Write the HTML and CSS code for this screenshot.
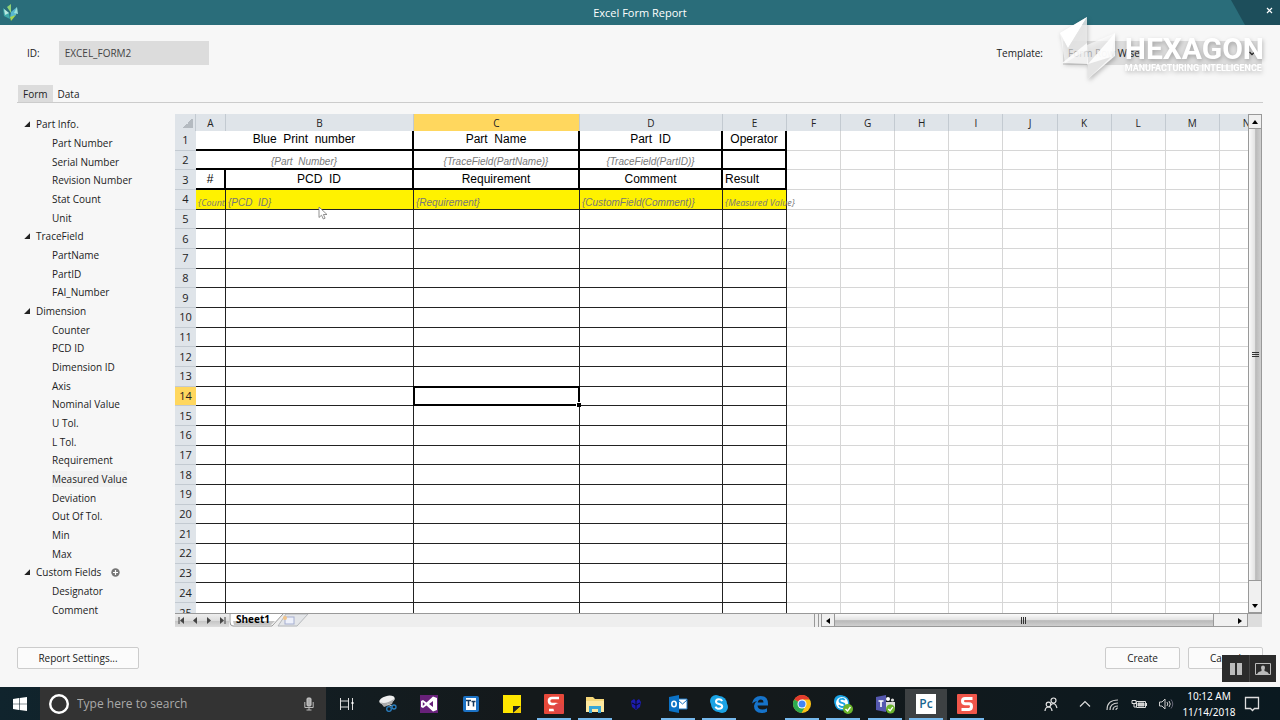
FILE: index.html
```html
<!DOCTYPE html>
<html lang="en">
  <head>
    <meta charset="utf-8">
    <title>Excel Form Report</title>
    <link rel="stylesheet" href="styles.css">
  </head>
  <body>
  <div class="titlebar">
      <svg class="app-logo" viewBox="0 0 16 17">
          <path d="M0 4l6 5 1 6-6-3z" fill="#3fa9a9"/>
          <path d="M4 3l4-3v9z" fill="#8fd175"/>
          <path d="M1 5l5 4-4 2z" fill="#b9e8e0"/>
          <path d="M8 8l6-5-1 8-6 3z" fill="#57b8cf"/>
          <path d="M7 13l6-2-5 6z" fill="#a8d84e"/>
          <path d="M14 3l-3 6 4 1z" fill="#9be0da"/>
      </svg>
      <h1>Excel Form Report</h1>
      <button class="close" aria-label="Close">
          <svg width="7" height="7" viewBox="0 0 7 7"><path d="M1 1l5 5M6 1L1 6" stroke="#fff" stroke-width="1.2"/></svg>
      </button>
  </div>

  <div class="head">
      <label for="formId">ID:</label>
      <input id="formId" type="text" value="EXCEL_FORM2">
      <label class="template-label" for="template">Template:</label>
      <div class="select-box">
          <select id="template">
              <option>Form Row Wise</option>
          </select>
          <svg class="arrow" width="6" height="5" viewBox="0 0 6 5"><path d="M.5 1L3 3.6 5.5 1" fill="none" stroke="#222" stroke-width="1.2"/></svg>
      </div>
  </div>

  <div class="tabs">
      <button class="tab active">Form</button>
      <button class="tab">Data</button>
  </div>

  <div class="work-area">
      <ul class="tree">
          <li class="group">Part Info.</li>
          <li>Part Number</li>
          <li>Serial Number</li>
          <li>Revision Number</li>
          <li>Stat Count</li>
          <li>Unit</li>
          <li class="group">TraceField</li>
          <li>PartName</li>
          <li>PartID</li>
          <li>FAI_Number</li>
          <li class="group">Dimension</li>
          <li>Counter</li>
          <li>PCD ID</li>
          <li>Dimension ID</li>
          <li>Axis</li>
          <li>Nominal Value</li>
          <li>U Tol.</li>
          <li>L Tol.</li>
          <li>Requirement</li>
          <li><span class="hover">Measured Value</span></li>
          <li>Deviation</li>
          <li>Out Of Tol.</li>
          <li>Min</li>
          <li>Max</li>
          <li class="group">Custom Fields
              <button class="add" aria-label="Add custom field">
                  <svg width="9" height="9" viewBox="0 0 9 9"><circle cx="4.5" cy="4.5" r="4.2" fill="#777"/><path d="M4.5 2v5M2 4.5h5" stroke="#fff" stroke-width="1.2"/></svg>
              </button>
          </li>
          <li>Designator</li>
          <li>Comment</li>
      </ul>

      <div class="sheet">
          <div class="sheet-top">
              <div class="viewport">
                  <table class="grid">
                      <colgroup>
                          <col class="col-num"><col class="col-a"><col class="col-b"><col class="col-c"><col class="col-d"><col class="col-e">
                          <col><col><col><col><col><col><col><col><col>
                      </colgroup>
                      <thead>
                          <tr>
                              <th class="corner"></th>
                              <th>A</th><th>B</th><th class="current">C</th><th>D</th><th>E</th><th>F</th><th>G</th><th>H</th>
                              <th>I</th><th>J</th><th>K</th><th>L</th><th>M</th><th>N</th>
                          </tr>
                      </thead>
                      <tbody id="rows">
                          <tr class="title-row">
                              <th>1</th>
                              <td class="box" colspan="2">Blue  Print  number</td><td class="box">Part  Name</td><td class="box">Part  ID</td><td class="box">Operator</td>
                              <td></td><td></td><td></td><td></td><td></td><td></td><td></td><td></td><td></td>
                          </tr>
                          <tr class="field-row">
                              <th>2</th>
                              <td class="box" colspan="2">{Part  Number}</td><td class="box">{TraceField(PartName)}</td><td class="box">{TraceField(PartID)}</td><td class="box"></td>
                              <td></td><td></td><td></td><td></td><td></td><td></td><td></td><td></td><td></td>
                          </tr>
                          <tr class="title-row">
                              <th>3</th>
                              <td class="box">#</td><td class="box">PCD  ID</td><td class="box">Requirement</td><td class="box">Comment</td><td class="box left">Result</td>
                              <td></td><td></td><td></td><td></td><td></td><td></td><td></td><td></td><td></td>
                          </tr>
                          <tr class="field-row yellow-row">
                              <th>4</th>
                              <td class="line small">{Count</td><td class="line">{PCD  ID}</td><td class="line">{Requirement}</td><td class="line">{CustomField(Comment)}</td><td class="line small">{Measured Value}</td>
                              <td></td><td></td><td></td><td></td><td></td><td></td><td></td><td></td><td></td>
                          </tr>
                      </tbody>
                  </table>
              </div>
              <div class="vscroll">
                  <button aria-label="Scroll up"><svg width="6" height="4" viewBox="0 0 6 4"><path d="M0 4l3-4 3 4z"/></svg></button>
                  <div class="vthumb"><svg width="7" height="6" viewBox="0 0 7 6"><path d="M0 .5h7M0 2.5h7M0 4.5h7" stroke="#333"/></svg></div>
                  <div class="vtrack"></div>
                  <button aria-label="Scroll down"><svg width="6" height="4" viewBox="0 0 6 4"><path d="M0 0h6L3 4z"/></svg></button>
              </div>
          </div>
          <div class="sheet-bottom">
              <div class="nav">
                  <button aria-label="First sheet"><svg width="7" height="7" viewBox="0 0 7 7"><path d="M1 0v7" stroke="#444"/><path d="M6 0v7L2 3.5z" fill="#444"/></svg></button>
                  <button aria-label="Previous sheet"><svg width="7" height="7" viewBox="0 0 7 7"><path d="M5 0v7L1 3.5z" fill="#444"/></svg></button>
                  <button aria-label="Next sheet"><svg width="7" height="7" viewBox="0 0 7 7"><path d="M2 0v7l4-3.5z" fill="#444"/></svg></button>
                  <button aria-label="Last sheet"><svg width="7" height="7" viewBox="0 0 7 7"><path d="M6 0v7" stroke="#444"/><path d="M1 0v7l4-3.5z" fill="#444"/></svg></button>
              </div>
              <button class="sheet-tab">
                  <svg viewBox="0 0 56 14"><path d="M0 0h54L43 12H3Q1 12 0 7z" fill="#fff"/><path d="M4 7h42l-4 4H5z" fill="#c4c4c4"/><path d="M1 0v8q0 4 3 4h39L54 0" fill="none" stroke="#999"/></svg>
                  <span>Sheet1</span>
              </button>
              <button class="new-sheet" aria-label="Insert sheet">
                  <svg width="32" height="14" viewBox="0 0 32 14"><path d="M9 0h22L20 12H1z" fill="#e4e6e9" stroke="#b5b8bb"/><rect x="8" y="3" width="9" height="7" fill="#eef1fb" stroke="#a5aed0"/><circle cx="8" cy="4" r="2" fill="#f2c58b"/></svg>
              </button>
              <div class="spacer"></div>
              <div class="gripper"></div>
              <div class="hscroll">
                  <button aria-label="Scroll left"><svg width="4" height="6" viewBox="0 0 4 6"><path d="M4 0v6L0 3z"/></svg></button>
                  <div class="hthumb"><svg width="6" height="7" viewBox="0 0 6 7"><path d="M.5 0v7M2.5 0v7M4.5 0v7" stroke="#333"/></svg></div>
                  <button class="hend" aria-label="Scroll right"><svg width="4" height="6" viewBox="0 0 4 6"><path d="M0 0v6l4-3z"/></svg></button>
              </div>
              <div class="size-box"></div>
          </div>
      </div>
  </div>

  <div class="footer">
      <button class="btn settings">Report Settings...</button>
      <div class="spacer"></div>
      <button class="btn">Create</button>
      <button class="btn">Cancel</button>
  </div>

  <div class="taskbar">
      <button class="start" aria-label="Start">
          <svg width="14" height="14" viewBox="0 0 14 14" fill="#fff"><path d="M0 2l6-.9v5.6H0zM6.6 1L14 0v6.7H6.6zM0 7.3h6v5.6L0 12zM6.6 7.3H14V14l-7.4-1z"/></svg>
      </button>
      <div class="search">
          <svg width="22" height="22" viewBox="0 0 22 22"><circle cx="11" cy="11" r="8.8" fill="none" stroke="#fff" stroke-width="2.4"/></svg>
          <input type="text" aria-label="Search" placeholder="Type here to search">
          <svg width="10" height="14" viewBox="0 0 10 14"><rect x="3" y="1" width="4" height="8" rx="1" fill="#aaa" stroke="#ccc"/><path d="M.8 5v5.5h8.4V5M5 10.5V13M2.5 13h5" fill="none" stroke="#bbb"/></svg>
      </div>
      <div class="apps">
          <button class="app" aria-label="Task View"><svg viewBox="0 0 20 20" fill="none" stroke="#ddd"><path d="M3.500 4v3h8V4M3.500 16v-3h8v3M3.500 7v6M11.500 7v6M15.500 4v12"/><path d="M14.500 8h2v2h-2z" fill="#fff" stroke="none"/></svg></button>
          <button class="app" aria-label="Snipping Tool"><svg viewBox="0 0 20 20"><ellipse cx="9" cy="6" rx="8" ry="4" transform="rotate(-15 9 6)" fill="#eee"/><path d="M2 8q5 3 14-3l-2 5-8 3z" fill="#aaa"/><path d="M9 10l5 2" stroke="#ccc"/><circle cx="11" cy="15" r="2.300" fill="none" stroke="#2a7fc0" stroke-width="1.300"/><circle cx="16" cy="13" r="2" fill="none" stroke="#2a7fc0" stroke-width="1.300"/></svg></button>
          <button class="app" aria-label="Visual Studio"><svg viewBox="0 0 20 20"><path d="M1 1h18v18H1z" fill="#68217a"/><path d="M14 2.500l4 1.500v12l-4 1.500-6.500-6L4 14l-2-1V7l2-1 3.500 2.500zM3.800 8v4L6 10zM14 7l-4 3 4 3z" fill="#fff" fill-rule="evenodd"/></svg></button>
          <button class="app" aria-label="Fonts"><svg viewBox="0 0 20 20"><rect x="2" y="2" width="16" height="16" rx="2" fill="#1c72c4"/><path d="M5 4h10v12H5z" fill="#fff"/><path d="M5 6.500h5M7.500 6v6M10.500 7.500h4M12.500 7.500v5" stroke="#17395c" stroke-width="1.500"/></svg></button>
          <button class="app" aria-label="Sticky Notes"><svg viewBox="0 0 20 20"><path d="M1 1h18v18H1z" fill="#ffe600"/><path d="M11 19v-7h8z" fill="#222"/><path d="M12 19l7-7v7z" fill="#f4cf00"/></svg></button>
          <button class="app open" aria-label="Snagit recorder"><svg viewBox="0 0 20 20"><rect width="20" height="20" rx="1" fill="#e7493b"/><path d="M15 4H8Q5 4 5 7t3 3h4q3 0 3 3t-3 3H5" fill="none" stroke="#fff" stroke-width="2.600"/><circle cx="15" cy="14.500" r="5.500" fill="#df4646"/></svg></button>
          <button class="app open" aria-label="File Explorer"><svg viewBox="0 0 20 20"><path d="M1 3h7l2 2h9v13H1z" fill="#f6d77a"/><path d="M1 7h18v11H1z" fill="#ffe9a0"/><path d="M4 19v-7h12v7h-3v-4H7v4z" fill="#39a7d8"/></svg></button>
          <button class="app" aria-label="Measurement"><svg viewBox="0 0 20 20"><path d="M5 7l3-2 2 2 3-2 2 3-1 5-4 3-4-3z" fill="#1c1cae"/><path d="M10 6v9M6 9l4 2 4-2" fill="none" stroke="#080824"/></svg></button>
          <button class="app open" aria-label="Outlook"><svg viewBox="0 0 20 20"><path d="M9 5h10v10H9z" fill="#fff" stroke="#1d78c8"/><path d="M10 6l4.500 4L19 6" fill="none" stroke="#0f6cbd"/><path d="M1 3l10-2v18L1 17z" fill="#0b72c6"/><ellipse cx="6" cy="10" rx="2.200" ry="2.800" fill="none" stroke="#fff" stroke-width="1.600"/></svg></button>
          <button class="app open" aria-label="Skype"><svg viewBox="0 0 20 20"><circle cx="7" cy="7" r="6" fill="#1ba3e4"/><circle cx="13" cy="13" r="6" fill="#1ba3e4"/><circle cx="10" cy="10" r="8" fill="#1ba3e4"/><path d="M13.200 7Q12 5 9.500 5.200 7 5.500 7 7.500t3 2.400q3.200.6 3.200 2.600T10 14.800q-2.600 0-3.500-2.200" fill="none" stroke="#fff" stroke-width="2"/></svg></button>
          <button class="app" aria-label="Edge"><svg viewBox="0 0 20 20"><path d="M2 9.500Q3.500 2 10.500 2q7.500 0 7.500 8v1.500H7.500q.2 4 5 4 2.500 0 4.500-1.300v3.500Q14.500 19 11.500 19 4 18.500 4 12q0-3 3-5-3 .5-5 2.500zM7.700 8.500h5.800q0-3-2.800-3-2.500 0-3 3z" fill="#1673ca"/></svg></button>
          <button class="app open" aria-label="Chrome"><svg viewBox="0 0 20 20"><circle cx="10" cy="10" r="9" fill="#fbc116"/><path d="M10 10L2.200 5.500A9 9 0 0 1 17.800 5.500H10z" fill="#e33b2e"/><path d="M10 10L2.200 5.500A9 9 0 0 0 9.500 19l4-7z" fill="#2da94f"/><circle cx="10" cy="10" r="4.500" fill="#fff"/><circle cx="10" cy="10" r="3.500" fill="#4285f4"/></svg></button>
          <button class="app open" aria-label="Skype for Business"><svg viewBox="0 0 20 20"><circle cx="7" cy="7" r="6" fill="#1ba3e4"/><circle cx="9" cy="9" r="7.500" fill="#1ba3e4"/><circle cx="9" cy="9" r="6" fill="#fff"/><path d="M11.800 6Q10.500 4.600 8.800 4.800 6.500 5 6.500 6.800T9 8.900q2.700.5 2.700 2.300T9 13q-2.200 0-3-1.800" fill="none" stroke="#1ba3e4" stroke-width="1.800"/><circle cx="15" cy="15" r="5" fill="#6cb52d"/><path d="M12.500 15l2 2 3-4" fill="none" stroke="#fff" stroke-width="1.400"/></svg></button>
          <button class="app open" aria-label="Teams"><svg viewBox="0 0 20 20"><circle cx="13" cy="5" r="2" fill="#fff"/><circle cx="17.500" cy="6" r="1.600" fill="#ddd"/><path d="M11 8h9v7h-9z" fill="#ddd"/><path d="M1 3l10-2v17L1 16z" fill="#5558af"/><path d="M3.500 7h5M6 7v6" stroke="#fff" stroke-width="1.600"/><circle cx="15.500" cy="15" r="4.500" fill="#6cb52d"/><path d="M13.300 15l1.800 1.800 2.700-3.600" fill="none" stroke="#fff" stroke-width="1.400"/></svg></button>
          <button class="app open current-app" aria-label="PC-DMIS"><span class="pc">Pc</span></button>
          <button class="app open" aria-label="Snagit"><svg viewBox="0 0 20 20"><rect width="20" height="20" rx="1" fill="#f0564a"/><path d="M15.500 4.500H8Q5.500 4.500 5.500 7T8 9.800h4q2.500 0 2.500 2.700T12 15.500H4.500" fill="none" stroke="#fff" stroke-width="3"/></svg></button>
      </div>
      <div class="tray">
          <svg viewBox="0 0 16 16" fill="none" stroke="#e4e4e4" stroke-width="1.200"><circle cx="10.500" cy="4.500" r="2.500"/><circle cx="5.500" cy="8.500" r="2.300"/><path d="M2 15q.3-4 3.500-4T9 15M7.500 9q4.500-4 6.500 3"/></svg>
          <svg viewBox="0 0 16 16" fill="none" stroke="#ddd" stroke-width="1.200"><path d="M3 10.500L8 5.500l5 5"/></svg>
          <svg viewBox="0 0 16 16" fill="none" stroke="#ccc" stroke-width="1.200"><path d="M3 14Q3 4 14 4M6 14q0-7 8-7M9 14q0-4 5-4M12 14q0-2 2-2"/></svg>
          <svg viewBox="0 0 16 16" fill="none" stroke="#ddd"><path d="M5.500 5.500h9v6h-9z"/><path d="M7 7h6v3H7z" fill="#ccc"/><path d="M15.500 7v3M1 4.500h4v3H1zM3 7v4h2"/></svg>
          <svg viewBox="0 0 16 16" fill="none" stroke="#ccc"><path d="M1.500 6v4H4l3 3V3L4 6zM9 6q1.500 2 0 4M11 5q2.500 3 0 6"/><path d="M13 3.500q3.500 4.500 0 9" stroke="#667"/></svg>
      </div>
      <div class="clock"><span>10:12 AM</span><span>11/14/2018</span></div>
      <button class="notes" aria-label="Notifications"><svg width="16" height="16" viewBox="0 0 16 16" fill="none" stroke="#ddd" stroke-width="1.300"><path d="M1.500 1.500h13v11h-4l-2 2-2-2h-5z"/></svg></button>
  </div>

  <div class="watermark">
      <svg width="58" height="64" viewBox="0 0 58 64">
          <path d="M28 1v33L6 47 1 17z" fill="#fff" opacity=".6"/>
          <path d="M28 1L9 32 1 17z" fill="#fff"/>
          <path d="M28 1v33l-19-2z" fill="#e2e2e2" opacity=".6"/>
          <path d="M28 27L3 47l26 1z" fill="#fff" opacity=".8"/>
          <path d="M56 17L28 29v20l24-8z" fill="#fff" opacity=".6"/>
          <path d="M56 17v23L29 63V48z" fill="#fff" opacity=".9"/>
          <path d="M52 41L29 63V48z" fill="#dedede" opacity=".8"/>
      </svg>
      <div class="brand"><strong>HEXAGON</strong><small>MANUFACTURING INTELLIGENCE</small></div>
  </div>

  <div class="player">
      <button aria-label="Pause"><svg width="12" height="12" viewBox="0 0 12 12" fill="#bbb"><path d="M0 0h5v12H0zM7 0h5v12H7z"/></svg></button>
      <button aria-label="Viewer"><svg width="16" height="12" viewBox="0 0 16 12"><path d="M.5.5h15v11H.5z" fill="none" stroke="#bbb"/><circle cx="8" cy="4.500" r="2" fill="#bbb"/><path d="M2 11q1-2.500 4.500-3V5h3v3q3.500.5 4.500 3z" fill="#bbb"/></svg></button>
  </div>

  <svg class="cursor" viewBox="0 0 10 14"><path d="M1 1v10.500l2.500-2.300L5.300 13l1.800-.8-1.700-3.700H9z" fill="#fff" stroke="#777" stroke-width=".8"/></svg>

  <script src="script.js"></script>
  </body>
</html>
```

FILE: styles.css
```css
* {
    box-sizing: border-box;
}

body {
    margin: 0;
    height: 100vh;
    display: flex;
    flex-direction: column;
    overflow: hidden;
    background-color: #f7f7f7;
    color: #222;
    font-family: "Open Sans", "Noto Sans", sans-serif;
    font-size: 10px;
}

button, input, select {
    font: inherit;
    color: inherit;
    margin: 0;
    padding: 0;
    border: 0;
    background: none;
}

svg {
    display: block;
    flex: none;
}

.spacer {
    flex: 1;
}

/* title bar */
.titlebar {
    display: flex;
    align-items: center;
    height: 25px;
    flex: none;
    background-color: #2a6d7a;
    color: #fff;
}

.app-logo {
    width: 16px;
    height: 17px;
    margin-left: 3px;
}

.titlebar h1 {
    flex: 1;
    margin: 0;
    padding-left: 30px;
    text-align: center;
    font-size: 11px;
    font-weight: normal;
}

.close {
    display: flex;
    justify-content: flex-end;
    width: 49px;
    height: 25px;
    padding: 7px 7px 0 0;
    background-color: #1d4e5b;
    clip-path: polygon(0 0, 100% 0, 100% 100%, 14px 100%);
}

/* id and template */
.head {
    display: flex;
    align-items: center;
    flex: none;
    padding: 16px 18px 20px 27px;
}

.head input {
    width: 150px;
    height: 24px;
    margin-left: 19px;
    padding: 0 6px;
    background-color: #dcdcdc;
    color: #444;
}

.template-label {
    margin-left: auto;
}

.select-box {
    display: flex;
    align-items: center;
    width: 199px;
    height: 24px;
    margin-left: 20px;
    padding-right: 7px;
    background-color: #dcdcdc;
}

.select-box select {
    flex: 1;
    height: 24px;
    padding-left: 5px;
    appearance: none;
}

.tabs {
    display: flex;
    flex: none;
    margin: 0 17px 11px;
    padding-left: 1px;
    border-bottom: 1px solid #ccc;
}

.tab {
    height: 17px;
    padding: 0 5px;
}

.tab.active {
    background-color: #dcdcdc;
}

.work-area {
    display: flex;
    flex: 1;
    min-height: 0;
    padding-right: 18px;
}

/* field tree */
.tree {
    display: grid;
    grid-auto-rows: 1fr;
    width: 175px;
    margin: 0;
    padding: 1px 0 8px 24px;
    list-style: none;
}

.tree li {
    display: flex;
    align-items: center;
    padding-left: 28px;
    line-height: 16px;
}

.tree .group {
    padding-left: 0;
}

.tree .group::before {
    content: "";
    width: 6px;
    height: 6px;
    margin-right: 6px;
    background-color: #222;
    clip-path: polygon(100% 0, 100% 100%, 0 100%);
}

.hover {
    background-color: #f1f1f1;
}

.add {
    margin-left: 10px;
}

/* spreadsheet */
.sheet {
    display: flex;
    flex-direction: column;
    flex: 1;
    min-width: 0;
}

.sheet-top {
    display: flex;
    flex: 1;
    min-height: 0;
}

.viewport {
    flex: 1;
    min-width: 0;
    overflow: hidden;
    background-color: #fff;
}

.grid {
    width: 1099px;
    height: 509px;
    table-layout: fixed;
    border-collapse: separate;
    border-spacing: 0;
}

.col-num { width: 21px; }
.col-a { width: 30px; }
.col-b { width: 188px; }
.col-c { width: 166px; }
.col-d { width: 143px; }
.col-e { width: 64px; }

.grid th {
    padding: 0;
    background-color: #dfe4e9;
    border-right: 1px solid #c3cad1;
    font-size: 11px;
    font-weight: normal;
    line-height: 14px;
}

.grid thead th {
    font-size: 10px;
}

.grid thead tr {
    height: 17px;
}

.grid tbody th {
    border-right: 0;
    border-bottom: 1px solid #c3cad1;
}

.grid .corner {
    background-image: linear-gradient(135deg, transparent 50%, #b4bac0 50%);
    background-size: 10px 10px;
    background-position: 8px 4px;
    background-repeat: no-repeat;
}

.grid .current {
    background-color: #ffd75e;
}

.grid td {
    padding: 0;
    border-right: 1px solid #d6d6d6;
    border-bottom: 1px solid #d6d6d6;
    white-space: pre;
    line-height: 13px;
}

.grid .line {
    border-color: #222;
}

.grid .box {
    border-right: 2px solid #000;
    border-bottom: 2px solid #000;
}

.title-row td {
    color: #000;
    font-family: "Liberation Sans", Arial, sans-serif;
    font-size: 12px;
    text-align: center;
}

.grid .left {
    padding-left: 2px;
    text-align: left;
}

.field-row td {
    color: #777;
    font-family: "Liberation Sans", Arial, sans-serif;
    font-size: 10px;
    font-style: italic;
    text-align: center;
    vertical-align: bottom;
}

.yellow-row .line {
    padding-left: 2px;
    background-color: #fff200;
    text-align: left;
}

.yellow-row .small {
    font-family: "Open Sans", "Noto Sans", sans-serif;
    font-size: 9px;
}

.grid .selected {
    position: relative;
}

.selected::before {
    content: "";
    position: absolute;
    inset: -1px;
    border: 2px solid #000;
}

.selected::after {
    content: "";
    position: absolute;
    right: -2px;
    bottom: -2px;
    width: 4px;
    height: 4px;
    background-color: #000;
    border: solid #fff;
    border-width: 1px 0 0 1px;
    box-sizing: content-box;
}

.vscroll {
    display: flex;
    flex-direction: column;
    width: 14px;
    border: 1px solid #999;
    background-color: #f0f0f0;
}

.vscroll button, .hscroll button {
    display: flex;
    align-items: center;
    justify-content: center;
    width: 12px;
    height: 13px;
}

.vthumb {
    display: flex;
    align-items: center;
    justify-content: center;
    flex: 1;
    border: solid #999;
    border-width: 1px 0;
    background-image: linear-gradient(90deg, #fafafa, #e2e2e2 50%, #b9b9b9 55%, #cfcfcf);
}

.vtrack {
    height: 18px;
}

.sheet-bottom {
    display: flex;
    height: 14px;
    border-top: 1px solid #999;
    background-color: #eee;
}

.nav {
    display: flex;
    align-items: center;
    justify-content: space-around;
    width: 54px;
    background-image: linear-gradient(#eee, #ddd 50%, #c6c6c6 55%, #ddd);
}

.sheet-tab {
    display: grid;
    width: 56px;
    color: #000;
    font-weight: bold;
    line-height: 11px;
}

.sheet-tab > * {
    grid-area: 1 / 1;
}

.sheet-tab span {
    text-align: left;
    padding-left: 7px;
}

.new-sheet {
    margin-left: -8px;
}

.gripper {
    width: 5px;
    margin-right: 2px;
    border: solid #999;
    border-width: 0 1px;
}

.hscroll {
    display: flex;
    width: 427px;
    border: solid #999;
    border-width: 0 1px 1px;
    background-color: #f0f0f0;
}

.hthumb {
    display: flex;
    align-items: center;
    justify-content: center;
    flex: 1;
    border: solid #999;
    border-width: 0 1px;
    background-image: linear-gradient(#fafafa, #e2e2e2 50%, #b9b9b9 55%, #cfcfcf);
}

.hscroll .hend {
    justify-content: flex-end;
    width: 33px;
    padding-right: 5px;
}

.size-box {
    width: 14px;
    background-color: #ddd;
}

/* buttons under the sheet */
.footer {
    display: flex;
    flex: none;
    gap: 8px;
    padding: 20px 17px 18px;
}

.btn {
    width: 75px;
    height: 22px;
    border: 1px solid #ccc;
    border-radius: 2px;
    background-color: #fbfbfb;
}

.btn.settings {
    width: 122px;
}

/* windows taskbar */
.taskbar {
    display: flex;
    flex: none;
    height: 33px;
    background-image: linear-gradient(90deg, #10242d, #14191b 40%, #14191b 60%, #0a1920);
    color: #fff;
}

.start {
    display: flex;
    align-items: center;
    justify-content: center;
    width: 40px;
}

.search {
    display: flex;
    align-items: center;
    width: 286px;
    padding: 0 12px 0 8px;
    background-color: #333;
}

.search input {
    flex: 1;
    min-width: 0;
    padding-left: 7px;
    font-size: 12px;
}

.search input::placeholder {
    color: #aaa;
}

.apps {
    display: flex;
    flex: 1;
    max-width: 662px;
}

.app {
    display: flex;
    align-items: center;
    justify-content: center;
    flex: 1;
    border: solid transparent;
    border-width: 2px 0 2px;
    background-clip: padding-box;
}

.app svg {
    width: 20px;
    height: 20px;
}

.app.open {
    background-image: linear-gradient(#76b9ed, #76b9ed);
    background-size: 34px 2px;
    background-position: bottom;
    background-repeat: no-repeat;
    border-bottom-width: 0;
    padding-bottom: 2px;
}

.current-app {
    background-color: #3d4143;
}

.pc {
    width: 20px;
    background-color: #fff;
    color: #17658f;
    font-size: 12px;
    font-weight: 600;
    line-height: 20px;
}

.tray {
    display: flex;
    align-items: center;
    gap: 11px;
    margin-left: auto;
}

.tray svg {
    width: 16px;
    height: 16px;
}

.tray svg:first-child {
    margin-right: 7px;
}

.clock {
    display: flex;
    flex-direction: column;
    align-items: center;
    justify-content: center;
    width: 70px;
    font-family: "Noto Sans", sans-serif;
    line-height: 16px;
}

.notes {
    display: flex;
    align-items: center;
    width: 36px;
}

/* things that float over the page */
.watermark {
    position: absolute;
    top: 16px;
    right: 16px;
    display: flex;
    gap: 8px;
    color: #fff;
    filter: drop-shadow(1px 2px 2px rgba(0, 0, 0, 0.25));
    pointer-events: none;
}

.brand {
    display: flex;
    flex-direction: column;
    padding-top: 18px;
    font-family: Roboto, "Liberation Sans", sans-serif;
}

.brand strong {
    font-size: 30px;
    line-height: 30px;
}

.brand small {
    font-size: 9px;
    font-weight: bold;
    line-height: 8px;
}

.player {
    position: absolute;
    right: 4px;
    bottom: 38px;
    display: flex;
    background-color: #2b2b2b;
}

.player button {
    display: flex;
    align-items: center;
    justify-content: center;
    width: 27px;
    height: 27px;
}

.player button + button {
    border-left: 1px solid #444;
}

.cursor {
    position: absolute;
    top: 206px;
    left: 318px;
    width: 10px;
    height: 14px;
}
```

FILE: script.js
```js
var body = document.getElementById('rows');

for (var row = 5; row <= 25; row++) {
    var tr = document.createElement('tr');
    var th = document.createElement('th');
    th.textContent = row;
    tr.appendChild(th);

    for (var col = 0; col < 14; col++) {
        var td = document.createElement('td');
        // A to E are inside the form
        if (col < 5) {
            td.className = 'line';
        }
        if (row === 14 && col === 2) {
            td.className = 'line selected';
            th.className = 'current';
        }
        tr.appendChild(td);
    }
    body.appendChild(tr);
}
```
